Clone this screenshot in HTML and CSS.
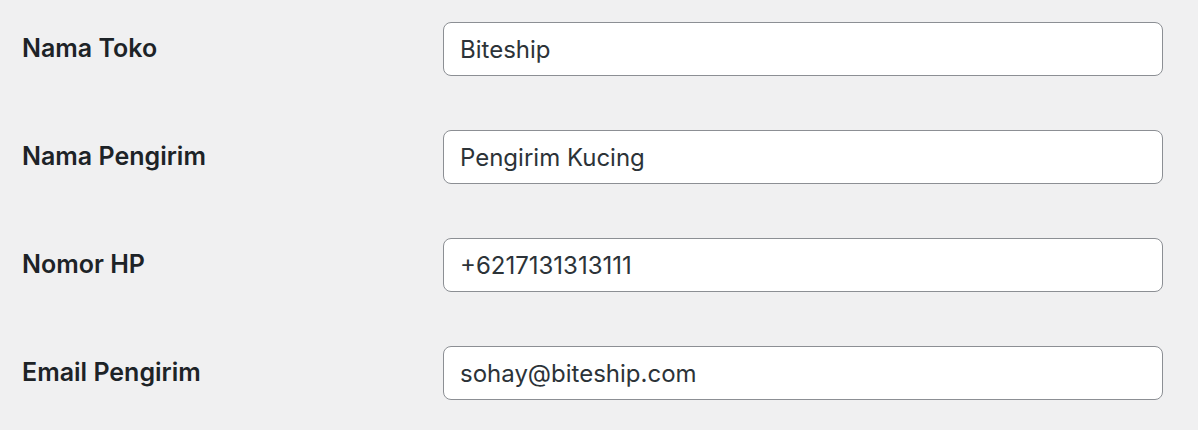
FILE: index.html
```html
<!DOCTYPE html>
<html lang="id">
<head>
  <meta charset="UTF-8">
  <meta name="viewport" content="width=device-width, initial-scale=1">
  <title>Pengaturan Toko</title>
  <link rel="stylesheet" href="styles.css">
</head>
<body>
  <form class="form-table">
    <div class="form-row">
      <label for="storeName">Nama Toko</label>
      <input type="text" id="storeName" value="Biteship">
    </div>
    <div class="form-row">
      <label for="senderName">Nama Pengirim</label>
      <input type="text" id="senderName" value="Pengirim Kucing">
    </div>
    <div class="form-row">
      <label for="phone">Nomor HP</label>
      <input type="text" id="phone" value="+6217131313111">
    </div>
    <div class="form-row">
      <label for="email">Email Pengirim</label>
      <input type="text" id="email" value="sohay@biteship.com">
    </div>
  </form>
</body>
</html>
```

FILE: styles.css
```css
*, *::before, *::after {
  box-sizing: border-box;
}
body {
  margin: 0;
  padding: 0;
  background: #f0f0f1;
  font-family: Inter, "Noto Sans", sans-serif;
  color: #1d2327;
}
.form-table {
  display: flex;
  flex-direction: column;
  gap: 54px;
  padding: 22px 0 0 22px;
}
.form-row {
  display: flex;
  align-items: flex-start;
}
label {
  flex: 0 0 421px;
  padding-top: 11px;
  font-size: 25px;
  font-weight: 600;
  line-height: 30px;
}
input[type="text"] {
  width: 720px;
  height: 54px;
  padding: 0 16px;
  border: 1px solid #8c8f94;
  border-radius: 8px;
  background: #fff;
  color: #2c3338;
  font-family: inherit;
  font-size: 24px;
  outline: none;
}
```
